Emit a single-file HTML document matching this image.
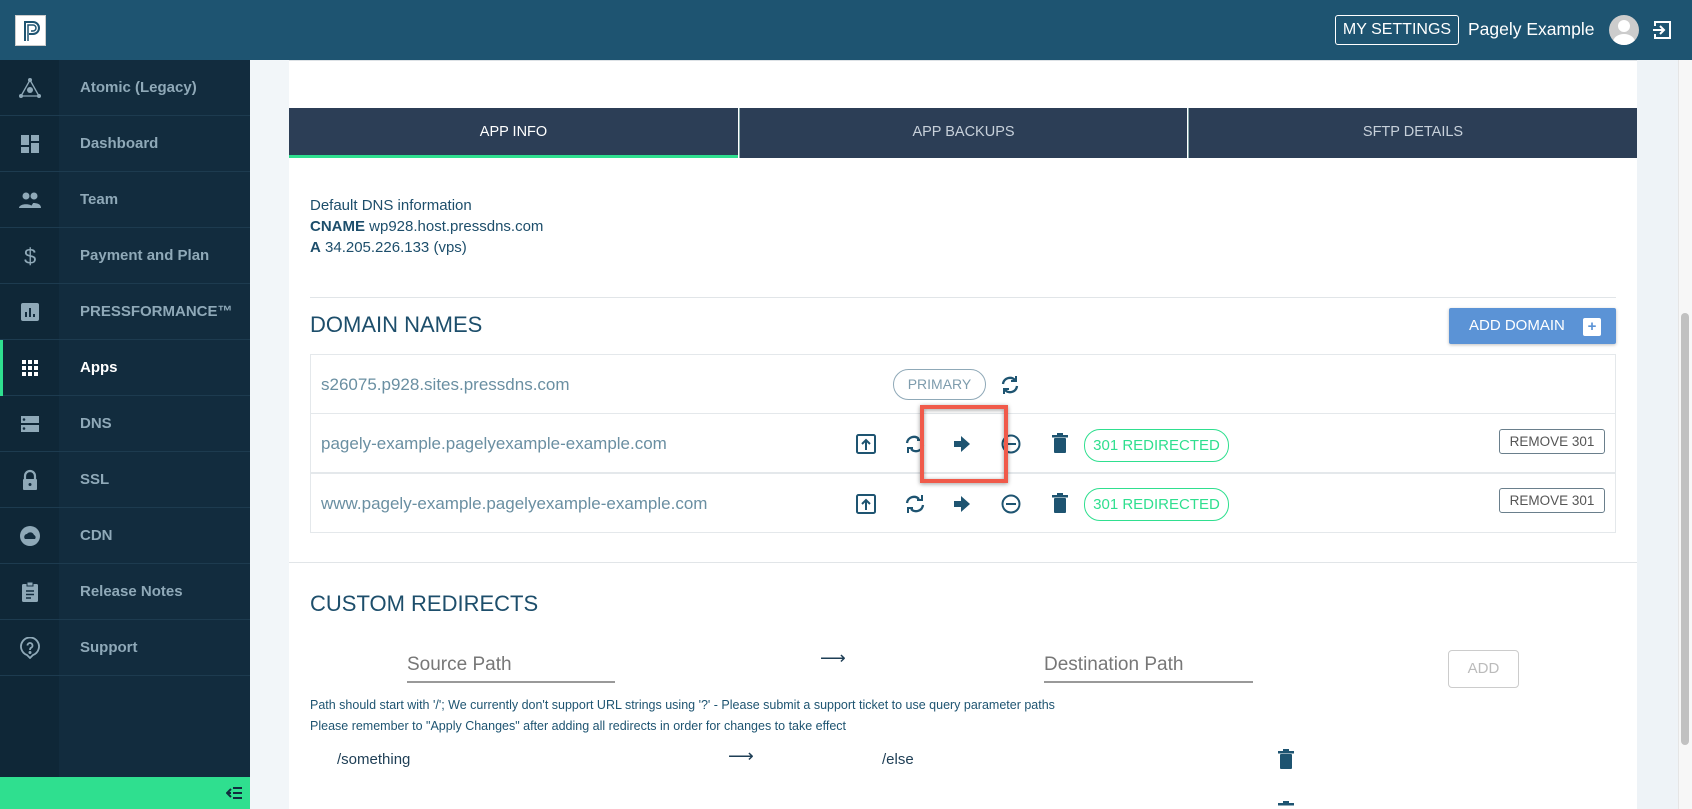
<!DOCTYPE html>
<html><head><meta charset="utf-8"><style>
*{box-sizing:border-box;margin:0;padding:0}
body{width:1692px;height:809px;overflow:hidden;position:relative;font-family:"Liberation Sans",sans-serif;background:#f2f6f9}
.abs{position:absolute}
#hdr{left:0;top:0;width:1692px;height:60px;background:#1e5471}
#side{left:0;top:60px;width:250px;height:749px;background:#122c3e}
#iconcol{left:0;top:60px;width:59px;height:717px;background:#0f2737}
.item{position:absolute;left:0;width:250px;height:56px;border-bottom:1px solid #1d3b4f}
.item .lbl{position:absolute;left:80px;top:0;line-height:56px;font-size:15px;font-weight:bold;color:#8fa9b8}
.item svg{position:absolute;left:19px;top:17px}
#green{left:0;top:777px;width:250px;height:32px;background:#2fdf8f}
#card{left:289px;top:60px;width:1348px;height:749px;background:#fff}
.tab{position:absolute;top:108px;height:50px;background:#2c3e56;color:#c7d0da;font-size:14.5px;text-align:center;line-height:48px}
.t{color:#1d4e6b}
.row{position:absolute;left:310px;width:1306px;height:60px;border:1px solid #e4e8eb}
.dom{position:absolute;left:10px;top:1px;line-height:58px;font-size:17px;color:#6a8fa2}
.pill{position:absolute;border-radius:16px;font-size:14px;text-align:center}
</style></head><body>
<div id="hdr" class="abs">
  <div class="abs" style="left:15px;top:15px;width:31px;height:31px;background:#fff;border:1px solid #ccc"><svg width="31" height="31" viewBox="0 0 31 31"><path d="M9 25V6h8a6 6 0 0 1 0 12h-4" fill="none" stroke="#1e5471" stroke-width="2"/><path d="M12 25V9h5a3 3 0 0 1 0 6h-2" fill="none" stroke="#1e5471" stroke-width="1.5"/></svg></div>
  <div class="abs" style="left:1335px;top:15px;width:124px;height:30px;border:1px solid #fff;border-radius:3px;color:#fff;font-size:16px;line-height:28px;text-align:center">MY SETTINGS</div>
  <div class="abs" style="left:1468px;top:19px;color:#fff;font-size:17.5px">Pagely Example</div>
  <div class="abs" style="left:1609px;top:15px;width:30px;height:30px;border-radius:50%;background:#ccc;overflow:hidden"><div class="abs" style="left:9px;top:5px;width:12px;height:12px;border-radius:50%;background:#fff"></div><div class="abs" style="left:4px;top:19px;width:22px;height:16px;border-radius:50%;background:#fff"></div></div>
  <svg class="abs" style="left:1652px;top:20px" width="20" height="20" viewBox="0 0 20 20" fill="none" stroke="#fff" stroke-width="2"><path d="M3 6V2h15v16H3v-4M1 10h11M8 6l4 4-4 4"/></svg>
</div>
<div id="side" class="abs"></div>
<div id="iconcol" class="abs"></div>
<div class="abs" style="left:0;top:340px;width:3px;height:56px;background:#2fdf8f;z-index:2"></div>
<div class="item" style="top:60px"><svg width="22" height="22" viewBox="0 0 22 22" fill="#8fa9b8"><circle cx="11" cy="3" r="2"/><circle cx="11" cy="13" r="3"/><circle cx="2" cy="19" r="2"/><circle cx="20" cy="19" r="2"/><path d="M11 3L2 19h18z" fill="none" stroke="#8fa9b8" stroke-width="1.3"/></svg><span class="lbl">Atomic (Legacy)</span></div>
<div class="item" style="top:116px"><svg width="22" height="22" viewBox="0 0 22 22" fill="#8fa9b8"><rect x="2" y="2" width="8" height="10"/><rect x="12" y="2" width="8" height="6"/><rect x="2" y="14" width="8" height="6"/><rect x="12" y="10" width="8" height="10"/></svg><span class="lbl">Dashboard</span></div>
<div class="item" style="top:172px"><svg width="22" height="22" viewBox="0 0 22 22" fill="#8fa9b8"><circle cx="7" cy="7" r="3.5"/><circle cx="15" cy="7" r="3.5"/><path d="M0 19c0-5 14-5 14 0zM12 19c0-3 2-4 2-5 4 0 8 1 8 5z"/></svg><span class="lbl">Team</span></div>
<div class="item" style="top:228px"><svg width="22" height="22" viewBox="0 0 22 22"><text x="5" y="19" font-size="22" fill="#8fa9b8" font-family="Liberation Sans">$</text></svg><span class="lbl">Payment and Plan</span></div>
<div class="item" style="top:284px"><svg width="22" height="22" viewBox="0 0 22 22"><rect x="2" y="2" width="18" height="18" rx="2" fill="#8fa9b8"/><path d="M7 16v-5M11 16V7M15 16v-3" stroke="#122c3e" stroke-width="2"/></svg><span class="lbl">PRESSFORMANCE™</span></div>
<div class="item" style="top:340px"><svg width="22" height="22" viewBox="0 0 22 22" fill="#fff"><rect x="3" y="3" width="4" height="4"/><rect x="9" y="3" width="4" height="4"/><rect x="15" y="3" width="4" height="4"/><rect x="3" y="9" width="4" height="4"/><rect x="9" y="9" width="4" height="4"/><rect x="15" y="9" width="4" height="4"/><rect x="3" y="15" width="4" height="4"/><rect x="9" y="15" width="4" height="4"/><rect x="15" y="15" width="4" height="4"/></svg><span class="lbl" style="color:#fff">Apps</span></div>
<div class="item" style="top:396px"><svg width="22" height="22" viewBox="0 0 22 22" fill="#8fa9b8"><rect x="2" y="3" width="18" height="7"/><rect x="2" y="12" width="18" height="7"/><circle cx="5" cy="6.5" r="1.3" fill="#122c3e"/><circle cx="5" cy="15.5" r="1.3" fill="#122c3e"/></svg><span class="lbl">DNS</span></div>
<div class="item" style="top:452px"><svg width="22" height="22" viewBox="0 0 22 22"><path d="M6 10V7a5 5 0 0 1 10 0v3" fill="none" stroke="#8fa9b8" stroke-width="2.2"/><rect x="4" y="10" width="14" height="11" rx="1" fill="#8fa9b8"/><circle cx="11" cy="15.5" r="1.5" fill="#122c3e"/></svg><span class="lbl">SSL</span></div>
<div class="item" style="top:508px"><svg width="22" height="22" viewBox="0 0 22 22"><circle cx="11" cy="11" r="10" fill="#8fa9b8"/><path d="M6 14a3 3 0 0 1 2-5 4 4 0 0 1 7 1 2.5 2.5 0 0 1 1 4z" fill="#122c3e"/></svg><span class="lbl">CDN</span></div>
<div class="item" style="top:564px"><svg width="22" height="22" viewBox="0 0 22 22"><rect x="3" y="3" width="16" height="18" rx="1.5" fill="#8fa9b8"/><rect x="8" y="1" width="6" height="4" fill="#8fa9b8" stroke="#122c3e"/><path d="M7 10h8M7 13.5h8M7 17h5" stroke="#122c3e" stroke-width="1.5"/></svg><span class="lbl">Release Notes</span></div>
<div class="item" style="top:620px"><svg width="22" height="22" viewBox="0 0 22 22" fill="none" stroke="#8fa9b8" stroke-width="1.8"><path d="M11 21l-3-3A9 9 0 1 1 14 18z"/><path d="M8.5 8.5a2.5 2.5 0 1 1 3.5 2.3c-1 .5-1 1-1 2.2"/><circle cx="11" cy="15.5" r=".6" fill="#8fa9b8"/></svg><span class="lbl">Support</span></div>
<div id="green" class="abs"><svg class="abs" style="left:226px;top:8px" width="16" height="16" viewBox="0 0 16 16" fill="none" stroke="#122c3e" stroke-width="2"><path d="M7 3h9M7 8h9M7 13h9M5 4L1 8l4 4M1 8h4"/></svg></div>

<div class="abs" style="left:1637px;top:60px;width:41px;height:749px;background:#eef3f7"></div>
<div class="abs" style="left:1678px;top:60px;width:14px;height:749px;background:#f7f7f7;border-left:1px solid #e5e5e5"></div>
<div class="abs" style="left:1681px;top:313px;width:8px;height:432px;border-radius:4px;background:#c1c1c1"></div>

<div id="card" class="abs"></div>
<div class="abs" style="left:289px;top:60px;width:1348px;height:1px;background:#dde2e6"></div>
<div class="tab" style="left:289px;width:449px;color:#fff;border-bottom:3px solid #2fdf8f">APP INFO</div>
<div class="tab" style="left:739px;width:448px;border-left:1px solid #8aa">APP BACKUPS</div>
<div class="tab" style="left:1188px;width:449px;border-left:1px solid #8aa">SFTP DETAILS</div>

<div class="abs t" style="left:310px;top:195px;font-size:15px;line-height:21px">Default DNS information<br><b>CNAME</b> wp928.host.pressdns.com<br><b>A</b> 34.205.226.133 (vps)</div>
<div class="abs" style="left:310px;top:297px;width:1306px;height:1px;background:#e1e5e8"></div>
<div class="abs t" style="left:310px;top:312px;font-size:22px">DOMAIN NAMES</div>
<div class="abs" style="left:1449px;top:308px;width:167px;height:36px;background:#5b93d6;border-radius:2px;color:#fff;font-size:15px;line-height:36px;padding-left:20px;box-shadow:0 1px 3px rgba(0,0,0,.25)">ADD DOMAIN<span class="abs" style="left:134px;top:10px;width:18px;height:18px;background:#fff;border-radius:2px;color:#5b93d6;font-weight:bold;line-height:17px;text-align:center;padding:0">+</span></div>

<div class="row" style="top:354px"><span class="dom">s26075.p928.sites.pressdns.com</span>
<div class="pill" style="left:582px;top:14px;width:93px;height:31px;border:1px solid #8fa9b8;color:#7e9cad;line-height:29px">PRIMARY</div></div>
<div class="row" style="top:413px"><span class="dom">pagely-example.pagelyexample-example.com</span></div>
<div class="row" style="top:473px"><span class="dom">www.pagely-example.pagelyexample-example.com</span></div>

<svg class="abs" style="left:999px;top:374px" width="22" height="22" viewBox="0 0 22 22" fill="none" stroke="#1e5471" stroke-width="2.3"><path d="M4 10a7 7 0 0 1 12-4M18 12a7 7 0 0 1-12 4"/><path d="M17 2v5h-5M5 20v-5h5" stroke-width="2"/></svg>

<svg class="abs" style="left:0;top:0" width="1692" height="809">
 <g fill="#1e5471" stroke="#1e5471">
  <g transform="translate(0,444)">
   <rect x="857" y="-9" width="18" height="18" rx="1.5" fill="none" stroke-width="2"/><path d="M866 6v-10M862 0l4-4 4 4" fill="none" stroke-width="2"/>
   <path d="M907 -1a7 7 0 0 1 12-4M923 1a7 7 0 0 1-12 4" fill="none" stroke-width="2.3"/><path d="M922 -9v5h-5M908 9v-5h5" fill="none" stroke-width="2"/>
   <path d="M954 -3h7v-5l9 8-9 8v-5h-7z" stroke="none"/>
   <circle cx="1011" cy="0" r="8.5" fill="none" stroke-width="2"/><path d="M1006 0h10" stroke-width="2"/>
   <rect x="1054" y="-6" width="12" height="15" rx="1" stroke="none"/><rect x="1052" y="-9" width="16" height="2.5" stroke="none"/><rect x="1057" y="-11" width="6" height="2" stroke="none"/>
  </g>
  <g transform="translate(0,504)">
   <rect x="857" y="-9" width="18" height="18" rx="1.5" fill="none" stroke-width="2"/><path d="M866 6v-10M862 0l4-4 4 4" fill="none" stroke-width="2"/>
   <path d="M907 -1a7 7 0 0 1 12-4M923 1a7 7 0 0 1-12 4" fill="none" stroke-width="2.3"/><path d="M922 -9v5h-5M908 9v-5h5" fill="none" stroke-width="2"/>
   <path d="M954 -3h7v-5l9 8-9 8v-5h-7z" stroke="none"/>
   <circle cx="1011" cy="0" r="8.5" fill="none" stroke-width="2"/><path d="M1006 0h10" stroke-width="2"/>
   <rect x="1054" y="-6" width="12" height="15" rx="1" stroke="none"/><rect x="1052" y="-9" width="16" height="2.5" stroke="none"/><rect x="1057" y="-11" width="6" height="2" stroke="none"/>
  </g>
  <g transform="translate(0,760)">
   <rect x="1280" y="-6" width="12" height="15" rx="1" stroke="none"/><rect x="1278" y="-9" width="16" height="2.5" stroke="none"/><rect x="1283" y="-11" width="6" height="2" stroke="none"/>
  </g>
  <g transform="translate(0,812)">
   <rect x="1278" y="-9" width="16" height="2.5" stroke="none"/><rect x="1283" y="-11" width="6" height="2" stroke="none"/>
  </g>
 </g>
 <rect x="922" y="407" width="84" height="74" fill="none" stroke="#f05a4a" stroke-width="4" style="filter:drop-shadow(0 1px 2px rgba(0,0,0,.4))"/>
</svg>

<div class="pill" style="left:1084px;top:429px;width:145px;height:33px;border:1px solid #2fdf8f;color:#2fdf8f;line-height:31px;font-size:15px">301 REDIRECTED</div>
<div class="pill" style="left:1084px;top:488px;width:145px;height:33px;border:1px solid #2fdf8f;color:#2fdf8f;line-height:31px;font-size:15px">301 REDIRECTED</div>
<div class="abs" style="left:1499px;top:429px;width:106px;height:25px;border:1px solid #6a7f8c;border-radius:3px;color:#555;font-size:13.5px;text-align:center;line-height:23px">REMOVE 301</div>
<div class="abs" style="left:1499px;top:488px;width:106px;height:25px;border:1px solid #6a7f8c;border-radius:3px;color:#555;font-size:13.5px;text-align:center;line-height:23px">REMOVE 301</div>

<div class="abs" style="left:289px;top:562px;width:1348px;height:1px;background:#e1e5e8"></div>
<div class="abs t" style="left:310px;top:591px;font-size:22px">CUSTOM REDIRECTS</div>
<div class="abs" style="left:407px;top:654px;width:208px;height:29px;border-bottom:2px solid #999;color:#777;font-size:19px">Source Path</div>
<div class="abs" style="left:820px;top:648px;color:#1e3e55;font-size:18px">⟶</div>
<div class="abs" style="left:1044px;top:654px;width:209px;height:29px;border-bottom:2px solid #999;color:#777;font-size:19px">Destination Path</div>
<div class="abs" style="left:1448px;top:650px;width:71px;height:38px;border:1px solid #ccc;border-radius:4px;color:#bbb;font-size:15px;text-align:center;line-height:36px">ADD</div>
<div class="abs t" style="left:310px;top:695px;font-size:12.5px;line-height:21px;color:#1e5471">Path should start with '/'; We currently don't support URL strings using '?' - Please submit a support ticket to use query parameter paths<br>Please remember to "Apply Changes" after adding all redirects in order for changes to take effect</div>
<div class="abs" style="left:337px;top:751px;color:#1e3e55;font-size:15px">/something</div>
<div class="abs" style="left:728px;top:746px;color:#1e3e55;font-size:18px">⟶</div>
<div class="abs" style="left:882px;top:751px;color:#1e3e55;font-size:15px">/else</div>
</body></html>
